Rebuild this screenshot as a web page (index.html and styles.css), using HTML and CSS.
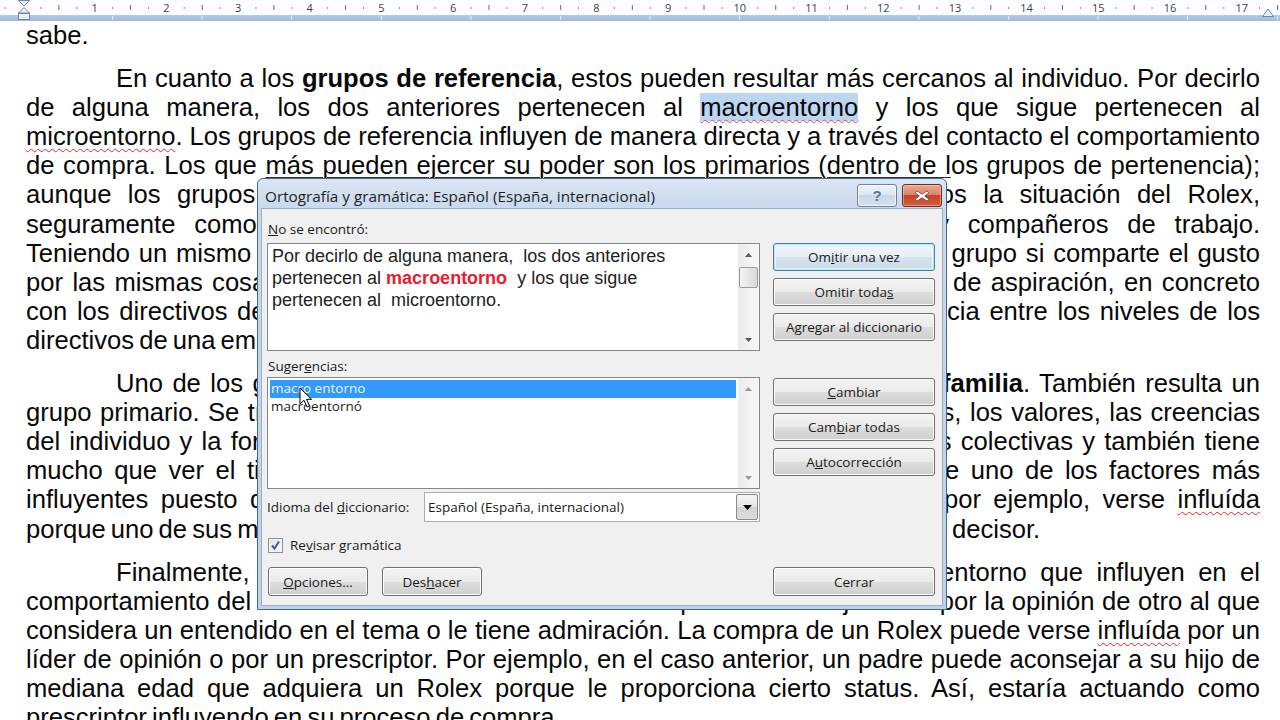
FILE: index.html
```html
<!DOCTYPE html>
<html lang="es">
<head>
    <meta charset="UTF-8">
    <meta name="viewport" content="width=device-width, initial-scale=1.0">
    <title>Ortografía y gramática</title>
    <link rel="stylesheet" href="styles.css">
</head>
<body>
    <div class="ruler">
        <svg class="indent-left" width="14" height="21" viewBox="0 0 14 21">
            <path d="M1.5 0.5 H12.5 L7 6 Z" fill="#eef2f8" stroke="#6f85a3"/>
            <path d="M7 7.5 L12.5 13 H1.5 Z" fill="#eef2f8" stroke="#6f85a3"/>
            <rect x="1.5" y="13.5" width="11" height="6" fill="#eef2f8" stroke="#6f85a3"/>
        </svg>
        <div class="ruler-scale">
            <span class="ruler-num">1</span><span class="ruler-num">2</span><span class="ruler-num">3</span>
            <span class="ruler-num">4</span><span class="ruler-num">5</span><span class="ruler-num">6</span>
            <span class="ruler-num">7</span><span class="ruler-num">8</span><span class="ruler-num">9</span>
            <span class="ruler-num">10</span><span class="ruler-num">11</span><span class="ruler-num">12</span>
            <span class="ruler-num">13</span><span class="ruler-num">14</span><span class="ruler-num">15</span>
            <span class="ruler-num">16</span><span class="ruler-num">17</span>
        </div>
        <div class="ruler-band"></div>
        <svg class="indent-right" width="14" height="10" viewBox="0 0 14 10">
            <path d="M7 1 L12.5 8.5 H1.5 Z" fill="#eef2f8" stroke="#6f85a3"/>
        </svg>
    </div>

    <div class="doc">
        <div class="para">
            <div class="ln end">sabe.</div>
        </div>
        <div class="para">
            <div class="ln first">En cuanto a los <b>grupos de referencia</b>, estos pueden resultar más cercanos al individuo. Por decirlo</div>
            <div class="ln">de alguna manera, los dos anteriores pertenecen al <span class="sel">macroentorno</span> y los que sigue pertenecen al</div>
            <div class="ln"><span class="err">microentorno</span>. Los grupos de referencia influyen de manera directa y a través del contacto el comportamiento</div>
            <div class="ln">de compra. Los que <span class="gram">más pueden ejercer su poder son los primarios (dentro de l</span>os grupos de pertenencia);</div>
            <div class="ln">aunque los grupos secundarios también resultan importantes. Si analizamos la situación del Rolex,</div>
            <div class="ln">seguramente como primera influencia estarían los amigos, los vecinos y compañeros de trabajo.</div>
            <div class="ln">Teniendo un mismo nivel social, una persona se sentirá más identificada con el grupo si comparte el gusto</div>
            <div class="ln">por las mismas cosas. Por otro lado, también influyen en la compra los grupos de aspiración, en concreto</div>
            <div class="ln">con los directivos de su empresa, ya que el Rolex marca claramente la diferencia entre los niveles de los</div>
            <div class="ln end">directivos de una empresa.</div>
        </div>
        <div class="para">
            <div class="ln first">Uno de los grupos de pertenencia más importantes del individuo es la <b>familia</b>. También resulta un</div>
            <div class="ln">grupo primario. Se trata del grupo que transmite a sus miembros las costumbres, los valores, las creencias</div>
            <div class="ln">del individuo y la formación de sus actitudes, opiniones, hábitos, gustos e ideas colectivas y también tiene</div>
            <div class="ln">mucho que ver el tipo de familia a la que pertenezca el individuo. Se trata de uno de los factores más</div>
            <div class="ln">influyentes puesto que la compra de un producto como el Rolex se puede, por ejemplo, verse <span class="err">influída</span></div>
            <div class="ln end">porque uno de sus miembros, como el padre o la madre, sea iniciador, prescriptor o decisor.</div>
        </div>
        <div class="para">
            <div class="ln first">Finalmente, los líderes de opinión son otro de los grupos del microentorno que influyen en el</div>
            <div class="ln">comportamiento del consumidor. Se trata de cuando una persona se deja llevar por la opinión de otro al que</div>
            <div class="ln">considera un entendido en el tema o le tiene admiración. La compra de un Rolex puede verse <span class="err">influída</span> por un</div>
            <div class="ln">líder de opinión o por un prescriptor. Por ejemplo, en el caso anterior, un padre puede aconsejar a su hijo de</div>
            <div class="ln">mediana edad que adquiera un Rolex porque le proporciona cierto status. Así, estaría actuando como</div>
            <div class="ln end">prescriptor influyendo en su proceso de compra.</div>
        </div>
    </div>

    <div class="dialog">
        <div class="dlg-title">
            <span class="dlg-caption">Ortografía y gramática: Español (España, internacional)</span>
            <span class="cap-btn help">?</span>
            <span class="cap-btn close">
                <svg width="16" height="12" viewBox="0 0 16 12">
                    <path d="M3 1 L8 4.3 L13 1 L15 2.8 L10.6 6 L15 9.2 L13 11 L8 7.7 L3 11 L1 9.2 L5.4 6 L1 2.8 Z" fill="#fff" stroke="#7a2c1f" stroke-width="0.7" stroke-linejoin="round"/>
                </svg>
            </span>
        </div>
        <div class="dlg-body">
            <div class="dlg-main">
                <div class="dlg-left">
                    <div class="lbl"><u>N</u>o se encontró:</div>
                    <div class="nf-box">
                        <div class="nf-text">Por decirlo de alguna manera,&nbsp; los dos anteriores<br>pertenecen al <b class="bad">macroentorno</b>&nbsp; y los que sigue<br>pertenecen al&nbsp; microentorno.</div>
                        <div class="vscroll">
                            <div class="sb-arrow"><svg width="7" height="4" viewBox="0 0 7 4"><path d="M3.5 0 L7 4 H0 Z" fill="#5a5a5a"/></svg></div>
                            <div class="sb-thumb"></div>
                            <div class="sb-track"></div>
                            <div class="sb-arrow"><svg width="7" height="4" viewBox="0 0 7 4"><path d="M0 0 H7 L3.5 4 Z" fill="#5a5a5a"/></svg></div>
                        </div>
                    </div>
                    <div class="lbl sug-lbl">Suger<u>e</u>ncias:</div>
                    <div class="sug-box">
                        <div class="sug-items">
                            <div class="sug-item selected">macro entorno</div>
                            <div class="sug-item">macroentornó</div>
                        </div>
                        <div class="vscroll">
                            <div class="sb-arrow"><svg width="7" height="4" viewBox="0 0 7 4"><path d="M3.5 0 L7 4 H0 Z" fill="#9a9a9a"/></svg></div>
                            <div class="sb-track"></div>
                            <div class="sb-arrow"><svg width="7" height="4" viewBox="0 0 7 4"><path d="M0 0 H7 L3.5 4 Z" fill="#9a9a9a"/></svg></div>
                        </div>
                    </div>
                    <div class="lang-row">
                        <span>Idioma del <u>d</u>iccionario:</span>
                        <div class="combo">
                            <span class="combo-text">Español (España, internacional)</span>
                            <span class="combo-btn"><svg width="9" height="5" viewBox="0 0 9 5"><path d="M0 0 H9 L4.5 5 Z" fill="#000"/></svg></span>
                        </div>
                    </div>
                    <div class="check-row">
                        <span class="checkbox">
                            <svg width="13" height="13" viewBox="0 0 13 13"><path d="M3 6.5 L5.5 9.5 L10 2.5" fill="none" stroke="#3b5da1" stroke-width="2"/></svg>
                        </span>
                        <span>Re<u>v</u>isar gramática</span>
                    </div>
                </div>
                <div class="dlg-right">
                    <div class="btn default">Om<u>i</u>tir una vez</div>
                    <div class="btn">Omitir toda<u>s</u></div>
                    <div class="btn">Agregar al diccionario</div>
                    <div class="btn gap-top"><u>C</u>ambiar</div>
                    <div class="btn">Cam<u>b</u>iar todas</div>
                    <div class="btn">A<u>u</u>tocorrección</div>
                </div>
            </div>
            <div class="dlg-foot">
                <div class="btn small"><u>O</u>pciones...</div>
                <div class="btn small">Des<u>h</u>acer</div>
                <div class="btn wide">Cerrar</div>
            </div>
        </div>
    </div>

    <svg class="cursor" width="14" height="22" viewBox="0 0 14 22">
        <path d="M1 1 V17 L5 13.2 L8 20 L10.5 18.9 L7.6 12.3 H12.6 Z" fill="#fff" stroke="#000" stroke-width="1" stroke-linejoin="round"/>
    </svg>
</body>
</html>
```

FILE: styles.css
```css
* {
    box-sizing: border-box;
}

body {
    margin: 0;
    width: 1280px;
    height: 720px;
    overflow: hidden;
    position: relative;
    background: #ffffff;
    font-family: "Liberation Sans", Arial, sans-serif;
}

/* ruler */
.ruler {
    position: relative;
    height: 21px;
    background: #fcfdfe;
}

.ruler-scale {
    height: 15px;
    display: flex;
    padding-left: 58.85px;
    background-image:
        linear-gradient(90deg, #6a6a6a 0 1px, transparent 1px),
        linear-gradient(90deg, #8c8c8c 0 1px, transparent 1px);
    background-size: 71.7px 5px, 35.85px 2px;
    background-position: 58.35px 5px, 40.4px 7px;
    background-repeat: repeat-x;
}

.ruler-num {
    flex: none;
    width: 71.7px;
    text-align: center;
    font: 11px/15px "Open Sans", sans-serif;
    color: #3f3f3f;
}

.ruler-band {
    height: 6px;
    background:
        linear-gradient(90deg, rgba(255, 255, 255, 0.7) 0 1px, transparent 1px) 112px 1px / 89.6px 4px repeat-x,
        linear-gradient(#b4cbe6, #9ebbdd);
}

.indent-left {
    position: absolute;
    left: 17px;
    top: 0;
}

.indent-right {
    position: absolute;
    left: 1261px;
    top: 8px;
}

/* document */
.doc {
    padding: 0 20px 0 26px;
    font-size: 25.6px;
    line-height: 29.1px;
    color: #080808;
    word-spacing: -2px;
}

.para + .para {
    margin-top: 14px;
}

.ln {
    text-align: justify;
    text-align-last: justify;
}

.ln.end {
    text-align-last: left;
}

.ln.first {
    padding-left: 90px;
}

.sel {
    background: #bcd5f1;
    text-decoration: underline wavy #d04a5a;
    text-decoration-thickness: 1px;
    text-underline-offset: 3px;
}

.err {
    text-decoration: underline wavy #e02828;
    text-decoration-thickness: 1px;
    text-underline-offset: 3px;
}

.gram {
    text-decoration: underline #333333;
    text-decoration-thickness: 1px;
    text-underline-offset: 3px;
}

/* spelling dialog */
.dialog {
    position: absolute;
    left: 257px;
    top: 178px;
    width: 690px;
    height: 432px;
    display: flex;
    flex-direction: column;
    padding: 0 3px 3px;
    border: 1px solid #3e6a93;
    border-radius: 6px 6px 0 0;
    background: linear-gradient(#dae6f4, #c9d9ec 30px, #bfd1e7);
    font: 13.5px/18px "Open Sans", sans-serif;
    color: #1b1b1b;
}

.dlg-title {
    height: 29px;
    display: flex;
    align-items: flex-start;
}

.dlg-caption {
    flex: 1;
    padding: 8px 0 0 4px;
    font-size: 15.3px;
    line-height: 18px;
    color: #1e1e1e;
}

.cap-btn {
    margin-top: 5px;
    width: 40px;
    height: 23px;
    border-radius: 3px;
    display: flex;
    align-items: center;
    justify-content: center;
}

.help {
    margin-right: 5px;
    border: 1px solid #70839a;
    background: linear-gradient(#eef3f9, #dce6f2 50%, #c8d6e8 50%, #d6e2f0);
    box-shadow: inset 0 0 0 1px rgba(255, 255, 255, 0.6);
    color: #60748f;
    font: bold 15px/1 "Liberation Sans", sans-serif;
}

.close {
    margin-right: 1px;
    border: 1px solid #6e2a1c;
    background: linear-gradient(#e9a996, #d8806a 50%, #c34428 50%, #d0603e);
    box-shadow: inset 0 0 0 1px rgba(255, 220, 210, 0.45);
}

.dlg-body {
    flex: 1;
    display: flex;
    flex-direction: column;
    padding: 11px 7px 0 5px;
    background: #f0f0f0;
    border: 1px solid #9aadc3;
}

.dlg-main {
    display: flex;
    gap: 13px;
}

.dlg-left {
    width: 493px;
}

.lbl {
    height: 18px;
    padding-left: 1px;
}

.sug-lbl {
    margin-top: 6px;
}

.nf-box,
.sug-box {
    display: flex;
    background: #ffffff;
    border: 1px solid #828790;
}

.nf-box {
    margin-top: 5px;
    height: 108px;
}

.nf-text {
    flex: 1;
    padding: 1px 4px 0;
    font: 18px/22px "Liberation Sans", Arial, sans-serif;
    color: #222222;
}

.bad {
    color: #e8202c;
}

.vscroll {
    width: 21px;
    display: flex;
    flex-direction: column;
    background: linear-gradient(90deg, #ececec, #f8f8f8);
}

.sb-arrow {
    height: 21px;
    display: flex;
    align-items: center;
    justify-content: center;
}

.sb-thumb {
    height: 21px;
    margin: 2px 1px 0;
    border: 1px solid #9a9a9a;
    border-radius: 2px;
    background: linear-gradient(90deg, #f4f4f4, #e6e6e6 50%, #d8d8d8);
}

.sb-track {
    flex: 1;
}

.sug-box {
    margin-top: 2px;
    height: 112px;
}

.sug-items {
    flex: 1;
    padding: 2px 2px 0;
}

.sug-item {
    height: 18px;
    padding-left: 1px;
    line-height: 17px;
}

.sug-item.selected {
    background: #3399ff;
    color: #eaf4ff;
}

.lang-row {
    margin-top: 3px;
    height: 30px;
    display: flex;
    align-items: center;
}

.combo {
    margin-left: auto;
    width: 336px;
    height: 30px;
    display: flex;
    align-items: center;
    background: #ffffff;
    border: 1px solid #abadb3;
}

.combo-text {
    flex: 1;
    padding-left: 3px;
}

.combo-btn {
    width: 22px;
    height: 26px;
    margin-right: 1px;
    display: flex;
    align-items: center;
    justify-content: center;
    border: 1px solid #8a8a8a;
    border-radius: 2px;
    background: linear-gradient(#f4f4f4, #e4e4e4 50%, #d3d3d3 50%, #dcdcdc);
}

.check-row {
    margin-top: 14px;
    height: 18px;
    display: flex;
    align-items: center;
    gap: 7px;
    padding-left: 1px;
}

.checkbox {
    width: 15px;
    height: 15px;
    display: flex;
    align-items: center;
    justify-content: center;
    border: 1px solid #8e8f8f;
    background: linear-gradient(135deg, #e3e3e3, #fbfbfb);
    box-shadow: inset 0 0 0 1px #f4f4f4;
}

.dlg-right {
    width: 162px;
    padding-top: 23px;
    display: flex;
    flex-direction: column;
    gap: 7px;
}

.btn {
    height: 28px;
    display: flex;
    align-items: center;
    justify-content: center;
    border: 1px solid #707070;
    border-radius: 3px;
    background: linear-gradient(#f3f3f3, #ebebeb 50%, #dddddd 50%, #cfcfcf);
    box-shadow: inset 0 0 0 1px #fbfbfb;
    color: #1b1b1b;
}

.btn.default {
    border-color: #3c7fb1;
    background: linear-gradient(#f0f6fa, #e6eff5 50%, #d6e4ee 50%, #cadbe7);
    box-shadow: inset 0 0 0 1px #bfe6f8, inset 0 0 0 2px #e4f4fb;
}

.btn.gap-top {
    margin-top: 30px;
}

.dlg-foot {
    margin-top: 13px;
    display: flex;
    gap: 14px;
    padding-left: 1px;
}

.btn.small {
    width: 100px;
    height: 29px;
}

.btn.wide {
    width: 162px;
    height: 29px;
    margin-left: auto;
}

.cursor {
    position: absolute;
    left: 299px;
    top: 387px;
}
```
